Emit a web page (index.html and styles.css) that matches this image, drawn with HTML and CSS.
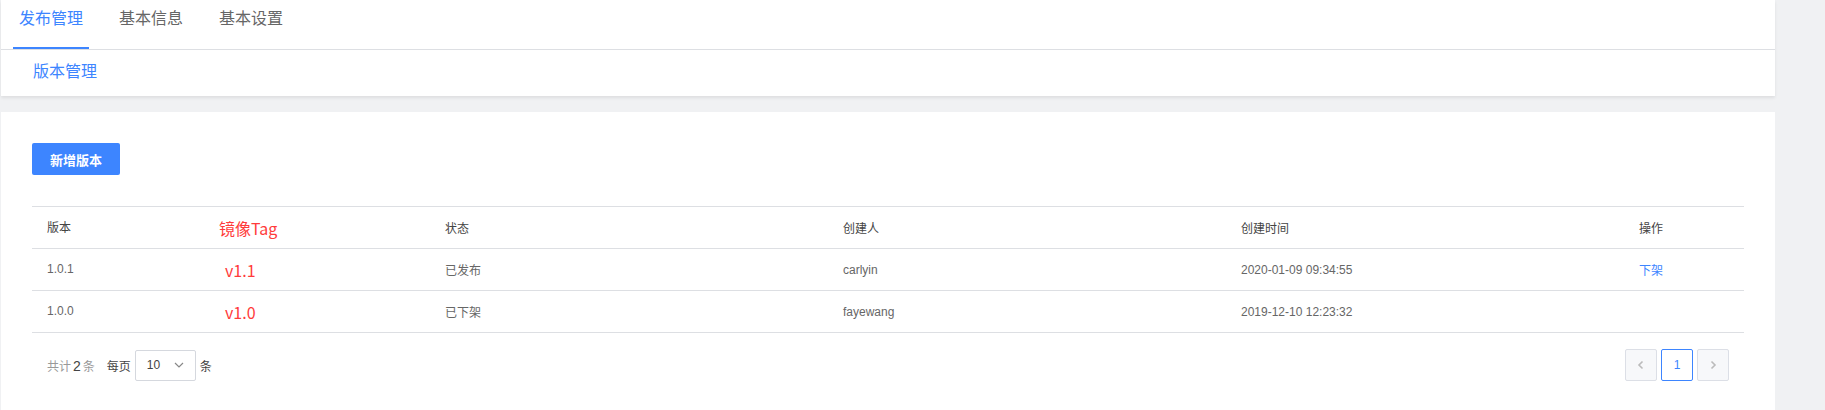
FILE: index.html
```html
<!DOCTYPE html>
<html>
<head>
<meta charset="utf-8">
<title>版本管理</title>
<link rel="stylesheet" href="styles.css">
</head>
<body>

<div class="head-card">
  <div class="tabs">
    <span class="tab active">发布管理</span>
    <span class="tab">基本信息</span>
    <span class="tab">基本设置</span>
  </div>
  <div class="subtabs">
    <span class="subtab">版本管理</span>
  </div>
</div>

<div class="main-card">
  <div class="toolbar">
    <button class="btn-primary">新增版本</button>
  </div>

  <table class="grid">
    <colgroup>
      <col class="c-wide"><col class="c-wide"><col class="c-wide"><col class="c-wide"><col class="c-op">
    </colgroup>
    <thead>
      <tr>
        <th><span class="ver">版本</span><span class="tag">镜像Tag</span></th>
        <th>状态</th>
        <th>创建人</th>
        <th>创建时间</th>
        <th>操作</th>
      </tr>
    </thead>
    <tbody>
      <tr>
        <td><span class="ver">1.0.1</span><span class="tag row-tag">v1.1</span></td>
        <td>已发布</td>
        <td>carlyin</td>
        <td>2020-01-09 09:34:55</td>
        <td><a class="link">下架</a></td>
      </tr>
      <tr>
        <td><span class="ver">1.0.0</span><span class="tag row-tag">v1.0</span></td>
        <td>已下架</td>
        <td>fayewang</td>
        <td>2019-12-10 12:23:32</td>
        <td></td>
      </tr>
    </tbody>
  </table>

  <div class="pager">
    <div class="pager-left">
      <span class="total">共计<b>2</b>条</span>
      <span class="per">每页</span>
      <span class="select">10
        <svg width="12" height="12" viewBox="0 0 12 12"><path d="M2 4l4 4 4-4" fill="none" stroke="#888" stroke-width="1.2"/></svg>
      </span>
      <span class="per">条</span>
    </div>
    <div class="pager-right">
      <span class="pg disabled"><svg width="12" height="12" viewBox="0 0 12 12"><path d="M7.5 2.5L4 6l3.5 3.5" fill="none" stroke="#bbb" stroke-width="1.6"/></svg></span>
      <span class="pg current">1</span>
      <span class="pg disabled"><svg width="12" height="12" viewBox="0 0 12 12"><path d="M4.5 2.5L8 6 4.5 9.5" fill="none" stroke="#bbb" stroke-width="1.6"/></svg></span>
    </div>
  </div>
</div>

</body>
</html>
```

FILE: styles.css
```css
html
{
	font-family: "Liberation Sans", "Noto Sans CJK SC", sans-serif;
}

body
{
	margin: 0;
	background-color: #F0F1F3;
	width: 1825px;
	height: 410px;
	overflow: hidden;
}

.head-card
{
	margin-left: 1px;
	width: 1774px;
	background-color: #FFFFFF;
	box-shadow: 0 2px 3px rgba(0, 0, 0, 0.08);
}

.tabs
{
	display: flex;
	gap: 24px;
	padding-left: 12px;
	border-bottom: 1px solid #DDDFE3;
}

.tab
{
	padding: 8px 6px 17px 6px;
	font-size: 16px;
	line-height: 22px;
	color: #666666;
	border-bottom: 2px solid transparent;
}

.tab.active
{
	color: #3D85FF;
	border-bottom-color: #3D85FF;
}

.subtabs
{
	padding: 11px 0 13px 32px;
}

.subtab
{
	font-size: 16px;
	line-height: 22px;
	color: #3D85FF;
}

.main-card
{
	margin: 16px 0 0 1px;
	width: 1774px;
	height: 298px;
	box-sizing: border-box;
	padding: 31px 31px 0 31px;
	background-color: #FFFFFF;
}

.toolbar
{
	height: 32px;
	margin-bottom: 31px;
}

.btn-primary
{
	width: 88px;
	height: 32px;
	border: none;
	border-radius: 2px;
	background-color: #3D85FF;
	color: #FFFFFF;
	font-family: inherit;
	font-size: 13px;
	font-weight: bold;
}

.grid
{
	width: 1712px;
	table-layout: fixed;
	border-collapse: collapse;
	border-top: 1px solid #DDDFE3;
}

.c-wide
{
	width: 398px;
}

.c-op
{
	width: 120px;
}

.grid th,
.grid td
{
	height: 41px;
	padding: 0 0 0 15px;
	text-align: left;
	font-size: 12px;
	font-weight: normal;
	color: #666666;
	border-bottom: 1px solid #DDDFE3;
	white-space: nowrap;
}

.grid th
{
	color: #444444;
}

.ver
{
	display: inline-block;
	width: 172px;
}

.tag
{
	font-family: "Noto Sans CJK SC", sans-serif;
	font-size: 16px;
	color: #FF3B3B;
	vertical-align: -3px;
}

.row-tag
{
	padding-left: 6px;
	vertical-align: -4px;
}

.link
{
	color: #3D85FF;
}

.pager
{
	display: flex;
	justify-content: space-between;
	align-items: center;
	margin-top: 16px;
	padding-left: 15px;
}

.pager-left
{
	display: flex;
	align-items: center;
	font-size: 12px;
}

.total
{
	color: #999999;
	margin-right: 12px;
}

.total b
{
	font-weight: normal;
	font-size: 14px;
	margin: 0 2px;
	color: #444444;
}

.per
{
	color: #444444;
}

.select
{
	display: flex;
	justify-content: space-between;
	align-items: center;
	box-sizing: border-box;
	width: 61px;
	height: 31px;
	margin: 0 4px;
	padding: 0 10px 0 11px;
	border: 1px solid #D5D8DE;
	border-radius: 2px;
	color: #444444;
}

.pager-right
{
	display: flex;
	gap: 4px;
	margin-right: 15px;
}

.pg
{
	display: flex;
	justify-content: center;
	align-items: center;
	box-sizing: border-box;
	width: 32px;
	height: 32px;
	border: 1px solid #DCDFE6;
	border-radius: 2px;
	font-size: 12px;
}

.pg.disabled
{
	background-color: #F7F8FA;
}

.pg.current
{
	border-color: #3D85FF;
	color: #3D85FF;
}
```
